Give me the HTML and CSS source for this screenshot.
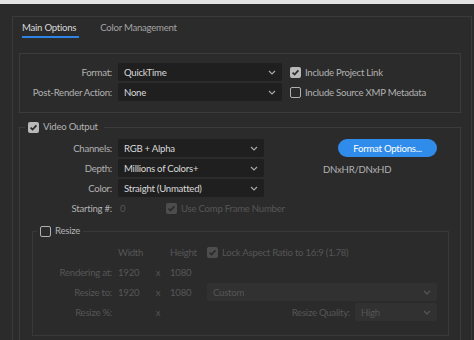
FILE: index.html
```html
<!DOCTYPE html>
<html lang="en">
<head>
    <meta charset="UTF-8">
    <title>Export Settings</title>
    <link rel="stylesheet" href="styles.css">
</head>
<body>
    <div class="topbar"></div>
    <div class="panel">
        <div class="tabs">
            <span class="tab active">Main Options</span>
            <span class="tab">Color Management</span>
        </div>

        <div class="box">
            <div class="row">
                <span class="lbl">Format:</span>
                <div class="select sel-format"><span>QuickTime</span><svg class="chev" width="8" height="5" viewBox="0 0 8 5"><path d="M1 1 L4 4 L7 1"/></svg></div>
                <div class="check"><span class="cb on"><svg width="11" height="11" viewBox="0 0 11 11"><path d="M2.6 5.6 L4.6 7.6 L8.4 3.4"/></svg></span>Include Project Link</div>
            </div>
            <div class="row">
                <span class="lbl">Post-Render Action:</span>
                <div class="select sel-format"><span>None</span><svg class="chev" width="8" height="5" viewBox="0 0 8 5"><path d="M1 1 L4 4 L7 1"/></svg></div>
                <div class="check"><span class="cb"></span>Include Source XMP Metadata</div>
            </div>
        </div>

        <fieldset class="group video">
            <legend><span class="cb on"><svg width="11" height="11" viewBox="0 0 11 11"><path d="M2.6 5.6 L4.6 7.6 L8.4 3.4"/></svg></span>Video Output</legend>
            <div class="video-body">
                <div class="video-main">
                    <div class="row">
                        <span class="lbl">Channels:</span>
                        <div class="select sel-video"><span>RGB + Alpha</span><svg class="chev" width="8" height="5" viewBox="0 0 8 5"><path d="M1 1 L4 4 L7 1"/></svg></div>
                    </div>
                    <div class="row">
                        <span class="lbl">Depth:</span>
                        <div class="select sel-video"><span>Millions of Colors+</span><svg class="chev" width="8" height="5" viewBox="0 0 8 5"><path d="M1 1 L4 4 L7 1"/></svg></div>
                    </div>
                    <div class="row">
                        <span class="lbl">Color:</span>
                        <div class="select sel-video"><span>Straight (Unmatted)</span><svg class="chev" width="8" height="5" viewBox="0 0 8 5"><path d="M1 1 L4 4 L7 1"/></svg></div>
                    </div>
                    <div class="row">
                        <span class="lbl">Starting #:</span>
                        <span class="start-val dis">0</span>
                        <div class="check dis flush"><span class="cb on off"><svg width="11" height="11" viewBox="0 0 11 11"><path d="M2.6 5.6 L4.6 7.6 L8.4 3.4"/></svg></span>Use Comp Frame Number</div>
                    </div>
                </div>
                <div class="video-side">
                    <button class="btn-blue">Format Options...</button>
                    <div class="codec">DNxHR/DNxHD</div>
                </div>
            </div>

            <fieldset class="group resize">
                <legend><span class="cb"></span>Resize</legend>
                <div class="row dis">
                    <span class="lbl"></span>
                    <span class="val">Width</span>
                    <span class="times"></span>
                    <span class="val val2">Height</span>
                    <div class="check flush"><span class="cb on off"><svg width="11" height="11" viewBox="0 0 11 11"><path d="M2.6 5.6 L4.6 7.6 L8.4 3.4"/></svg></span>Lock Aspect Ratio to 16:9 (1.78)</div>
                </div>
                <div class="row dis">
                    <span class="lbl">Rendering at:</span>
                    <span class="val">1920</span>
                    <span class="times">x</span>
                    <span class="val val2">1080</span>
                </div>
                <div class="row dis">
                    <span class="lbl">Resize to:</span>
                    <span class="val">1920</span>
                    <span class="times">x</span>
                    <span class="val val2">1080</span>
                    <div class="select sel-custom"><span>Custom</span><svg class="chev" width="8" height="5" viewBox="0 0 8 5"><path d="M1 1 L4 4 L7 1"/></svg></div>
                </div>
                <div class="row dis">
                    <span class="lbl">Resize %:</span>
                    <span class="val"></span>
                    <span class="times">x</span>
                    <span class="val val2"></span>
                    <span class="lbl lbl-quality">Resize Quality:</span>
                    <div class="select sel-high"><span>High</span><svg class="chev" width="8" height="5" viewBox="0 0 8 5"><path d="M1 1 L4 4 L7 1"/></svg></div>
                </div>
            </fieldset>
        </fieldset>
    </div>
</body>
</html>
```

FILE: styles.css
```css
body {
    margin: 0;
    height: 340px;
    overflow: hidden;
    background-color: #2b2b2b;
    font-family: Lato, "Liberation Sans", sans-serif;
    font-size: 9.6px;
    letter-spacing: -0.25px;
    color: #b2b2b2;
}

.topbar {
    height: 4px;
    background-color: #e3e3e3;
}

.panel {
    margin: 12px 2px 0 12px;
    padding: 0 10px 0 6px;
    height: 400px;
    border: 1px solid #3a3a3a;
}

.tabs {
    display: flex;
    gap: 21px;
    margin-left: 3px;
}

.tab {
    padding: 4px 3px 1px 0;
    line-height: 14px;
    color: #a3a3a3;
    border-bottom: 2px solid transparent;
}

.tab.active {
    color: #d8d8d8;
    border-bottom-color: #2f83e4;
}

.box {
    margin-top: 15px;
    padding: 8px 0 10px;
    border: 1px solid #3c3c3c;
}

.row {
    display: flex;
    align-items: center;
    height: 20px;
    white-space: nowrap;
}

.lbl {
    width: 92px;
    margin-right: 6px;
    text-align: right;
    flex-shrink: 0;
}

.select {
    display: flex;
    align-items: center;
    justify-content: space-between;
    height: 18px;
    padding: 0 6px;
    box-sizing: border-box;
    background-color: #1f1f1f;
    border-radius: 2px;
    color: #d9d9d9;
    flex-shrink: 0;
}

.chev path {
    fill: none;
    stroke: #a8a8a8;
    stroke-width: 1.2;
}

.sel-format {
    width: 164px;
}

.sel-video {
    width: 146px;
}

.check {
    display: flex;
    align-items: center;
    gap: 4px;
    margin-left: 8px;
}

.check.flush {
    margin-left: 0;
}

.cb {
    display: inline-block;
    width: 11px;
    height: 11px;
    box-sizing: border-box;
    border: 1.5px solid #b0b0b0;
    border-radius: 2px;
    flex-shrink: 0;
}

.cb.on {
    border: none;
    background-color: #b9b9b9;
}

.cb svg {
    display: block;
}

.cb svg path {
    fill: none;
    stroke: #2b2b2b;
    stroke-width: 1.7;
}

.cb.off {
    background-color: #4d4d4d;
}

.dis {
    color: #565656;
}

.dis .chev path {
    stroke: #575757;
}

/* fieldset groups */
.group {
    margin: 7px 0 0;
    padding: 4px 0 0;
    min-width: 0;
    border: 1px solid #3c3c3c;
}

.group legend {
    display: flex;
    align-items: center;
    gap: 4px;
    margin-left: 5px;
    padding: 0 6px 0 3px;
    line-height: 14px;
}

.video {
    padding-bottom: 30px;
}

.video-body {
    display: flex;
}

.video-main {
    width: 244px;
    flex-shrink: 0;
}

.start-val {
    width: 48px;
    padding-left: 2px;
    box-sizing: border-box;
    flex-shrink: 0;
}

.video-side {
    margin-left: 59px;
    padding-top: 1px;
}

.btn-blue {
    display: block;
    margin-left: 15px;
    width: 99px;
    height: 18px;
    padding: 0;
    border: none;
    border-radius: 9px;
    background-color: #2f8ceb;
    color: #ffffff;
    font: inherit;
    letter-spacing: inherit;
}

.codec {
    margin-top: 6px;
    line-height: 14px;
}

.resize {
    margin: 6px 11px 0 12px;
    padding: 4px 0 13px;
    border-color: #393939;
}

.resize legend {
    margin-left: 4px;
    padding: 0 3px;
}

.resize .lbl {
    width: 79px;
}

.val {
    width: 36px;
    flex-shrink: 0;
}

.val2 {
    width: 37px;
    margin-left: 8px;
}

.times {
    width: 8px;
    text-align: center;
    flex-shrink: 0;
}

.dis .select {
    background-color: #313131;
    color: #565656;
}

.sel-custom {
    width: 230px;
}

.resize .lbl-quality {
    width: 143px;
    margin-right: 5px;
}

.sel-high {
    width: 82px;
}
```
